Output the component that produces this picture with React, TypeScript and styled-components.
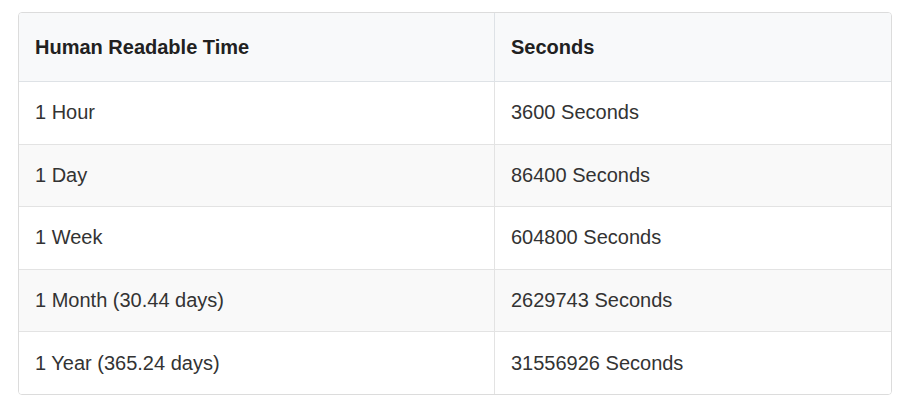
import React from 'react';
import styled, { createGlobalStyle } from 'styled-components';

const GlobalStyle = createGlobalStyle`
  html, body {
    margin: 0;
    padding: 0;
    background: #fff;
  }
  body {
    font-family: 'Liberation Sans', Arial, sans-serif;
    color: #333;
  }
`;

const Page = styled.div`
  padding: 12px 24px 12px 18px;
`;

const Frame = styled.div`
  border: 1px solid #dcdcdc;
  border-radius: 4px;
  overflow: hidden;
`;

const Table = styled.table`
  width: 100%;
  border-collapse: collapse;
  font-size: 20px;
`;

const HeadCell = styled.th<{ $first?: boolean }>`
  height: 68px;
  padding: 0 16px;
  text-align: left;
  font-weight: bold;
  color: #212121;
  background: #f8f9fa;
  border-bottom: 1px solid #dee2e6;
  border-left: ${(p) => (p.$first ? 'none' : '1px solid #dee2e6')};
  width: ${(p) => (p.$first ? '443px' : 'auto')};
`;

const Row = styled.tr<{ $striped: boolean }>`
  background: ${(p) => (p.$striped ? '#f9f9f9' : '#fff')};
`;

const Cell = styled.td<{ $first?: boolean; $last?: boolean }>`
  height: 61.6px;
  padding: 0 16px;
  color: #333;
  border-bottom: ${(p) => (p.$last ? 'none' : '1px solid #e3e3e3')};
  border-left: ${(p) => (p.$first ? 'none' : '1px solid #e3e3e3')};
`;

const rows = [
  ['1 Hour', '3600 Seconds'],
  ['1 Day', '86400 Seconds'],
  ['1 Week', '604800 Seconds'],
  ['1 Month (30.44 days)', '2629743 Seconds'],
  ['1 Year (365.24 days)', '31556926 Seconds'],
];

export default function App() {
  return (
    <>
      <GlobalStyle />
      <Page>
        <Frame>
          <Table>
            <thead>
              <tr>
                <HeadCell $first>Human Readable Time</HeadCell>
                <HeadCell>Seconds</HeadCell>
              </tr>
            </thead>
            <tbody>
              {rows.map(([human, secs], i) => (
                <Row key={human} $striped={i % 2 === 1}>
                  <Cell $first $last={i === rows.length - 1}>
                    {human}
                  </Cell>
                  <Cell $last={i === rows.length - 1}>{secs}</Cell>
                </Row>
              ))}
            </tbody>
          </Table>
        </Frame>
      </Page>
    </>
  );
}
